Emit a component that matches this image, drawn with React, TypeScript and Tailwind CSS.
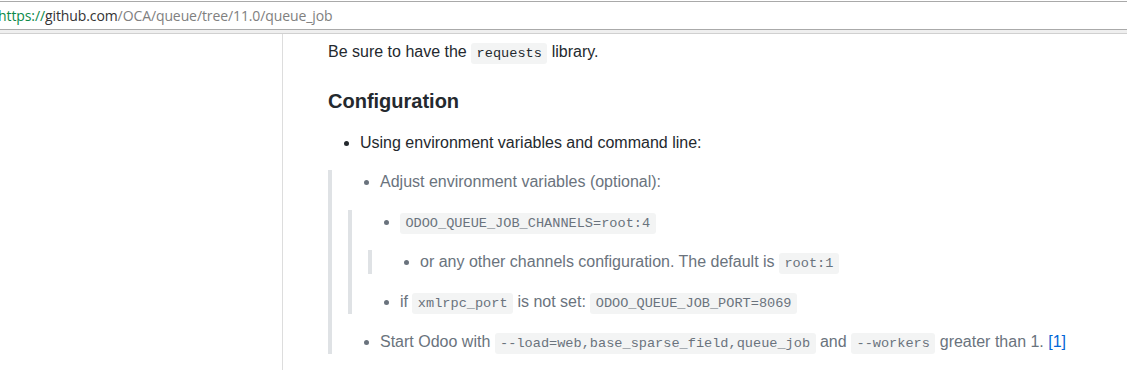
import type { ReactNode } from "react";

const sans = { fontFamily: '"Liberation Sans", Arial, sans-serif' };

function Code({ children }: { children: ReactNode }) {
  return (
    <code className="rounded-[3px] bg-[#f3f4f4] px-[5.4px] py-[3px] font-['Liberation_Mono',monospace] text-[13.6px] leading-none">
      {children}
    </code>
  );
}

function Quote({ children, className = "" }: { children: ReactNode; className?: string }) {
  return (
    <div className={`border-l-4 border-[#dfe2e5] px-4 text-[#6a737d] ${className}`}>
      {children}
    </div>
  );
}

function Bullet({ children }: { children: ReactNode }) {
  return (
    <ul className="list-disc pl-8">
      <li>{children}</li>
    </ul>
  );
}

function App() {
  return (
    <div className="h-[370px] w-[1127px] overflow-hidden bg-white">
      <div className="mt-px flex h-[28px] items-center border-t border-[#a9a9a9] font-['Open_Sans',sans-serif] text-[14px] tracking-[-0.1px]">
        <span className="-ml-[2px] whitespace-nowrap">
          <span className="text-[#0b8a4a]">https://</span>
          <span className="text-[#333]">github.com</span>
          <span className="text-[#808080]">/OCA/queue/tree/11.0/queue_job</span>
        </span>
      </div>
      <div className="h-[5px] border-y border-t-[#aaaaaa] border-b-[#d0d0d0] bg-[#efefef]" />
      <div className="flex h-[336px]">
        <div className="w-[283px] shrink-0 border-r border-[#dddddd]" />
        <div
          className="flex-1 pl-[45px] pt-[6px] text-[16px] leading-6 text-[#24292e]"
          style={sans}
        >
          <p>
            Be sure to have the <Code>requests</Code> library.
          </p>
          <h3 className="mt-[25px] mb-[17px] text-[20px] leading-[1.25] font-bold">Configuration</h3>
          <Bullet>Using environment variables and command line:</Bullet>
          <Quote className="mt-[15px]">
            <Bullet>Adjust environment variables (optional):</Bullet>
            <Quote className="mt-4">
              <Bullet>
                <Code>ODOO_QUEUE_JOB_CHANNELS=root:4</Code>
              </Bullet>
              <Quote className="mt-4">
                <Bullet>
                  or any other channels configuration. The default is <Code>root:1</Code>
                </Bullet>
              </Quote>
              <div className="mt-4">
                <Bullet>
                  if <Code>xmlrpc_port</Code> is not set: <Code>ODOO_QUEUE_JOB_PORT=8069</Code>
                </Bullet>
              </div>
            </Quote>
            <div className="mt-4">
              <Bullet>
                Start Odoo with <Code>--load=web,base_sparse_field,queue_job</Code> and{" "}
                <Code>--workers</Code> greater than 1. <span className="text-[#0366d6]">[1]</span>
              </Bullet>
            </div>
          </Quote>
        </div>
      </div>
    </div>
  );
}

export default App;
